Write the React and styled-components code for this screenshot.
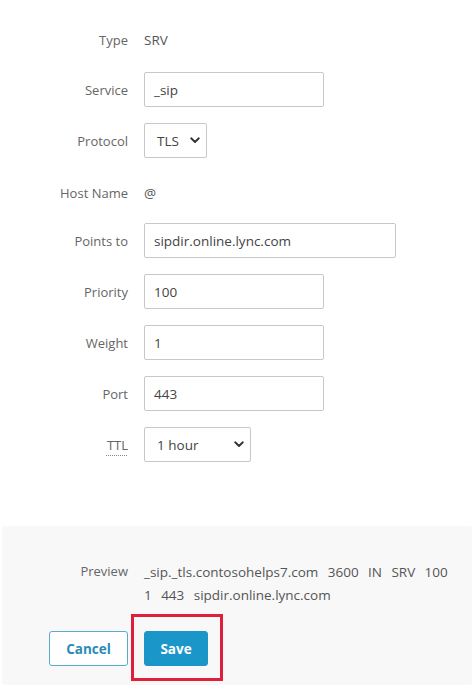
import React from "react";
import styled, { createGlobalStyle } from "styled-components";

const Global = createGlobalStyle`
  html, body { margin: 0; padding: 0; background: #fff; }
  body { font-family: "Open Sans", "Noto Sans", Arial, sans-serif; font-size: 13.5px; color: #555; }
  * { box-sizing: border-box; }
`;

const Page = styled.div`
  width: 474px;
  height: 688px;
  display: flex;
  flex-direction: column;
  overflow: hidden;
`;

const Form = styled.div`
  display: flex;
  flex-direction: column;
`;

const Row = styled.div`
  display: grid;
  grid-template-columns: 128px auto;
  column-gap: 16px;
  align-items: center;
  height: ${(p) => p.$h || 35}px;
  margin-top: ${(p) => p.$mt}px;
`;

const Label = styled.div`
  text-align: right;
  color: #666;
  font-size: 13px;
  line-height: 20px;
`;

const AbbrLabel = styled.span`
  text-decoration: underline dotted #888;
  text-decoration-thickness: 1px;
  text-underline-offset: 5px;
`;

const Value = styled.div`
  color: #555;
  line-height: 20px;
`;

const Input = styled.div`
  width: ${(p) => p.$w}px;
  height: 35px;
  border: 1px solid #c8c8c8;
  border-radius: 2px;
  padding: 0 9px;
  display: flex;
  align-items: center;
  color: #444;
  background: #fff;
`;

const Select = styled.div`
  width: ${(p) => p.$w}px;
  height: 35px;
  border: 1px solid #c8c8c8;
  border-radius: 2px;
  padding: 0 6px 0 12px;
  display: flex;
  align-items: center;
  justify-content: space-between;
  color: #444;
  background: #fff;
`;

const Chevron = () => (
  <svg width="10" height="7" viewBox="0 0 10 7" aria-hidden="true">
    <path d="M1.2 1.3 L5 5 L8.8 1.3" fill="none" stroke="#333" strokeWidth="1.9" strokeLinecap="round" strokeLinejoin="round" />
  </svg>
);

const Panel = styled.div`
  margin: 64px 2px 0 2px;
  height: 159px;
  background: #f8f8f8;
  border-radius: 3px;
  padding-top: 35px;
  display: flex;
  flex-direction: column;
`;

const PreviewRow = styled.div`
  display: grid;
  grid-template-columns: 126px 310px;
  column-gap: 16px;
  align-items: start;
  line-height: 23px;
`;

const PreviewText = styled.div`
  white-space: pre-wrap;
  word-spacing: 1.2px;
  color: #555;
`;

const Actions = styled.div`
  display: flex;
  gap: 16px;
  margin-top: 24px;
  padding-left: 47px;
`;

const Button = styled.button`
  height: 35px;
  width: ${(p) => p.$w}px;
  border-radius: 3px;
  font-family: "Open Sans", "Noto Sans", Arial, sans-serif;
  font-weight: 700;
  font-size: 13.5px;
  cursor: pointer;
  padding: 0;
  border: 1px solid ${(p) => (p.$primary ? "#1b96c9" : "#5aabc8")};
  background: ${(p) => (p.$primary ? "#1b96c9" : "#fff")};
  color: ${(p) => (p.$primary ? "#fff" : "#2a8cb6")};
`;

const Highlight = styled.div`
  position: relative;
  &::after {
    content: "";
    position: absolute;
    top: -17px;
    left: -13px;
    right: -15px;
    bottom: -15px;
    border: 3px solid #e0203a;
    pointer-events: none;
  }
`;

export default function App() {
  return (
    <Page>
      <Global />
      <Form>
        <Row $h={30} $mt={25}>
          <Label>Type</Label>
          <Value>SRV</Value>
        </Row>
        <Row $mt={17}>
          <Label>Service</Label>
          <Input $w={180}>_sip</Input>
        </Row>
        <Row $mt={16}>
          <Label>Protocol</Label>
          <Select $w={63}>
            TLS
            <Chevron />
          </Select>
        </Row>
        <Row $h={30} $mt={20}>
          <Label>Host Name</Label>
          <Value>@</Value>
        </Row>
        <Row $mt={15}>
          <Label>Points to</Label>
          <Input $w={252}>sipdir.online.lync.com</Input>
        </Row>
        <Row $mt={16}>
          <Label>Priority</Label>
          <Input $w={180}>100</Input>
        </Row>
        <Row $mt={16}>
          <Label>Weight</Label>
          <Input $w={180}>1</Input>
        </Row>
        <Row $mt={16}>
          <Label>Port</Label>
          <Input $w={180}>443</Input>
        </Row>
        <Row $mt={16}>
          <Label>
            <AbbrLabel>TTL</AbbrLabel>
          </Label>
          <Select $w={107}>
            1 hour
            <Chevron />
          </Select>
        </Row>
      </Form>
      <Panel>
        <PreviewRow>
          <Label>Preview</Label>
          <PreviewText>{"_sip._tls.contosohelps7.com  3600  IN  SRV  100  1  443  sipdir.online.lync.com"}</PreviewText>
        </PreviewRow>
        <Actions>
          <Button $w={79}>Cancel</Button>
          <Highlight>
            <Button $primary $w={64}>Save</Button>
          </Highlight>
        </Actions>
      </Panel>
    </Page>
  );
}
